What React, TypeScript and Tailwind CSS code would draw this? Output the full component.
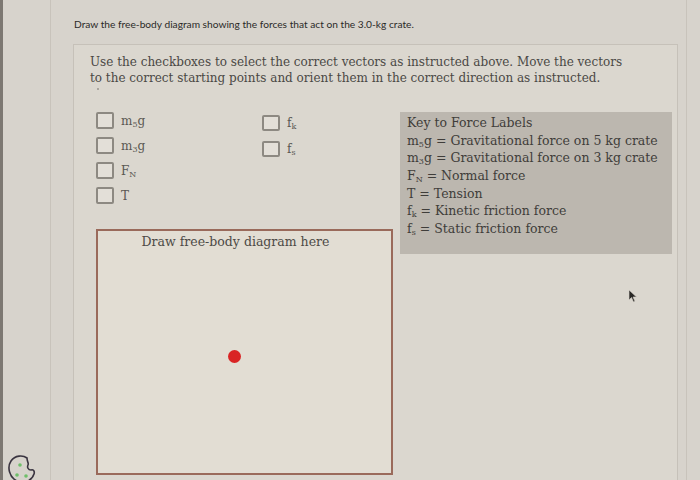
import React from "react"

const serif = { fontFamily: '"DejaVu Serif", "Liberation Serif", serif' }

function Label({ base, sub }: { base: string; sub?: string }) {
  return (
    <span>
      {base}
      {sub && <sub className="text-[8px]">{sub}</sub>}
      {base === "m" && "g"}
    </span>
  )
}

function Check({ children, tall }: { children: React.ReactNode; tall?: boolean }) {
  return (
    <div className="flex items-center gap-[7px]">
      <div className={`w-[18px] ${tall ? "h-[17px]" : "h-[16px]"} rounded-[2px] border-2 border-[#8d8982] bg-[#e3dfd8]`} />
      <div className="text-[12px] leading-none text-[#5a5753]">{children}</div>
    </div>
  )
}

const KEY: [React.ReactNode, string][] = [
  [<Label base="m" sub="5" />, "Gravitational force on 5 kg crate"],
  [<Label base="m" sub="3" />, "Gravitational force on 3 kg crate"],
  [<Label base="F" sub="N" />, "Normal force"],
  [<span>T</span>, "Tension"],
  [<Label base="f" sub="k" />, "Kinetic friction force"],
  [<Label base="f" sub="s" />, "Static friction force"],
]

export default function App() {
  return (
    <div className="relative flex h-[480px] w-[700px] overflow-hidden border-l-[3px] border-[#7d7872] bg-[#d7d3cc]">
      <div className="ml-[47px] mr-[13px] flex flex-1 flex-col border-x border-[#c8c3bb]">
        <p
          className="pl-[23px] pt-[17px] text-[10.2px] text-[#2b2a28]"
          style={{ fontFamily: 'Lato, "Open Sans", sans-serif' }}
        >
          Draw the free-body diagram showing the forces that act on the 3.0-kg crate.
        </p>
        <div
          className="ml-[22px] mr-[8px] mt-[12px] flex flex-1 flex-col border-l border-t border-r border-[#c6c1b9] bg-[#dbd7cf]"
          style={serif}
        >
          <p className="whitespace-nowrap pl-[16px] pt-[9px] text-[12px] leading-[16px] text-[#4a4845]">
            Use the checkboxes to select the correct vectors as instructed above. Move the vectors
            <br />
            to the correct starting points and orient them in the correct direction as instructed.
          </p>
          <div className="ml-[23px] mt-[2px] h-[2px] w-[2px] rounded-full bg-[#9a968f]" />
          <div className="ml-[22px] mt-[22px] flex items-start">
            <div className="flex w-[296px] flex-col">
              <div className="flex">
                <div className="flex w-[166px] flex-col gap-[8px]">
                  <Check tall>
                    <Label base="m" sub="5" />
                  </Check>
                  <Check tall>
                    <Label base="m" sub="3" />
                  </Check>
                  <Check tall>
                    <Label base="F" sub="N" />
                  </Check>
                  <Check tall>T</Check>
                </div>
                <div className="mt-[3px] flex flex-col gap-[10px]">
                  <Check>
                    <Label base="f" sub="k" />
                  </Check>
                  <Check>
                    <Label base="f" sub="s" />
                  </Check>
                </div>
              </div>
              <div className="relative mt-[25px] h-[246px] w-[297px] border-2 border-[#9a6a5b] bg-[#e2ddd3]">
                <p className="pr-[18px] pt-[2px] text-center text-[12.5px] text-[#4d4a46]">Draw free-body diagram here</p>
                <div className="absolute left-[130px] top-[119px] h-[13px] w-[13px] rounded-full bg-[#d92424]" />
              </div>
            </div>
            <div className="ml-[8px] h-[142px] w-[272px] bg-[#bcb7af] pl-[7px] pt-[2px] text-[12.5px] leading-[17.6px] text-[#3f3d3a]">
              <div>Key to Force Labels</div>
              {KEY.map(([sym, desc], i) => (
                <div key={i} className="whitespace-nowrap">
                  {sym} = {desc}
                </div>
              ))}
            </div>
          </div>
        </div>
      </div>

      <svg className="absolute left-[625px] top-[289px]" width="12" height="14" viewBox="0 0 12 14">
        <path d="M1 1 L1 11 L3.5 8.5 L5.5 13 L7 12.3 L5 8 L8.5 8 Z" fill="#2a2826" stroke="#d6d1ca" strokeWidth="0.6" />
      </svg>

      <svg className="absolute left-[2px] top-[452px]" width="32" height="32" viewBox="0 0 32 32">
        <path
          d="M22 6 C18 3 10 3 6 9 C2 15 4 25 12 29 C19 32 27 29 29 22 C30 19 28 17 26 18 C23 18 22 15 23 13 C24 11 22 10 22 6 Z"
          fill="none"
          stroke="#3a3440"
          strokeWidth="1.6"
        />
        <circle cx="15" cy="13" r="1.8" fill="#6fbf6a" />
        <circle cx="12" cy="23" r="1.8" fill="#6fbf6a" />
        <circle cx="21" cy="24" r="1.8" fill="#6fbf6a" />
      </svg>
    </div>
  )
}
